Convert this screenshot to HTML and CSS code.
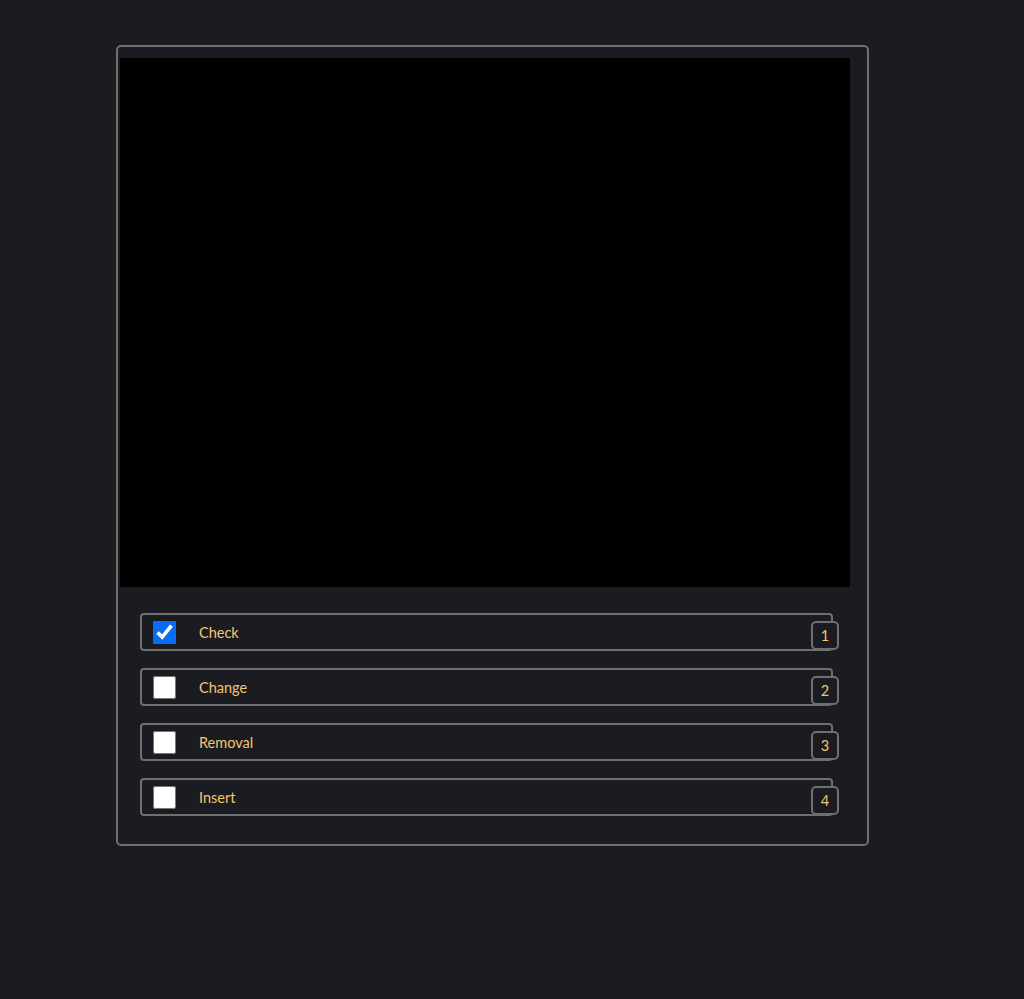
FILE: index.html
```html
<!DOCTYPE html>
<html>
<head>
<meta charset="utf-8">
<link rel="stylesheet" href="styles.css">
</head>
<body>
<div class="panel">
  <div class="canvas"></div>
  <div class="list">
    <label class="row"><input type="checkbox" class="cb" checked><span class="label">Check</span><span class="badge">1</span></label>
    <label class="row"><input type="checkbox" class="cb"><span class="label">Change</span><span class="badge">2</span></label>
    <label class="row"><input type="checkbox" class="cb"><span class="label">Removal</span><span class="badge">3</span></label>
    <label class="row"><input type="checkbox" class="cb"><span class="label">Insert</span><span class="badge">4</span></label>
  </div>
</div>
</body>
</html>
```
FILE: styles.css
```css
html, body {
  margin: 0;
  padding: 0;
  background: #1b1c21;
  font-family: Lato, "Liberation Sans", sans-serif;
}
body {
  padding-top: 45px;
  padding-left: 116px;
}
.panel {
  box-sizing: border-box;
  width: 753px;
  height: 801px;
  border: 2px solid #707070;
  border-radius: 5px;
  padding: 11px 0 0 2px;
}
.canvas {
  width: 730px;
  height: 529px;
  background: #000;
}
.list {
  display: flex;
  flex-direction: column;
  gap: 17px;
  padding: 26px 0 0 20px;
}
.row {
  position: relative;
  box-sizing: border-box;
  width: 693px;
  height: 38px;
  border: 2px solid #6f6f6f;
  border-radius: 4px;
  display: flex;
  align-items: center;
  padding-left: 11px;
}
.cb {
  margin: 0;
  width: 23px;
  height: 23px;
  accent-color: #0a6cf5;
}
.label {
  margin-left: 23px;
  color: #f4c66e;
  font-size: 14.5px;
}
.badge {
  position: absolute;
  right: -8px;
  top: 6px;
  box-sizing: border-box;
  width: 28px;
  height: 29px;
  border: 2px solid #6f6f6f;
  border-radius: 5px;
  background: #1b1c21;
  color: #f4c66e;
  font-size: 14.5px;
  display: flex;
  align-items: center;
  justify-content: center;
}
```
